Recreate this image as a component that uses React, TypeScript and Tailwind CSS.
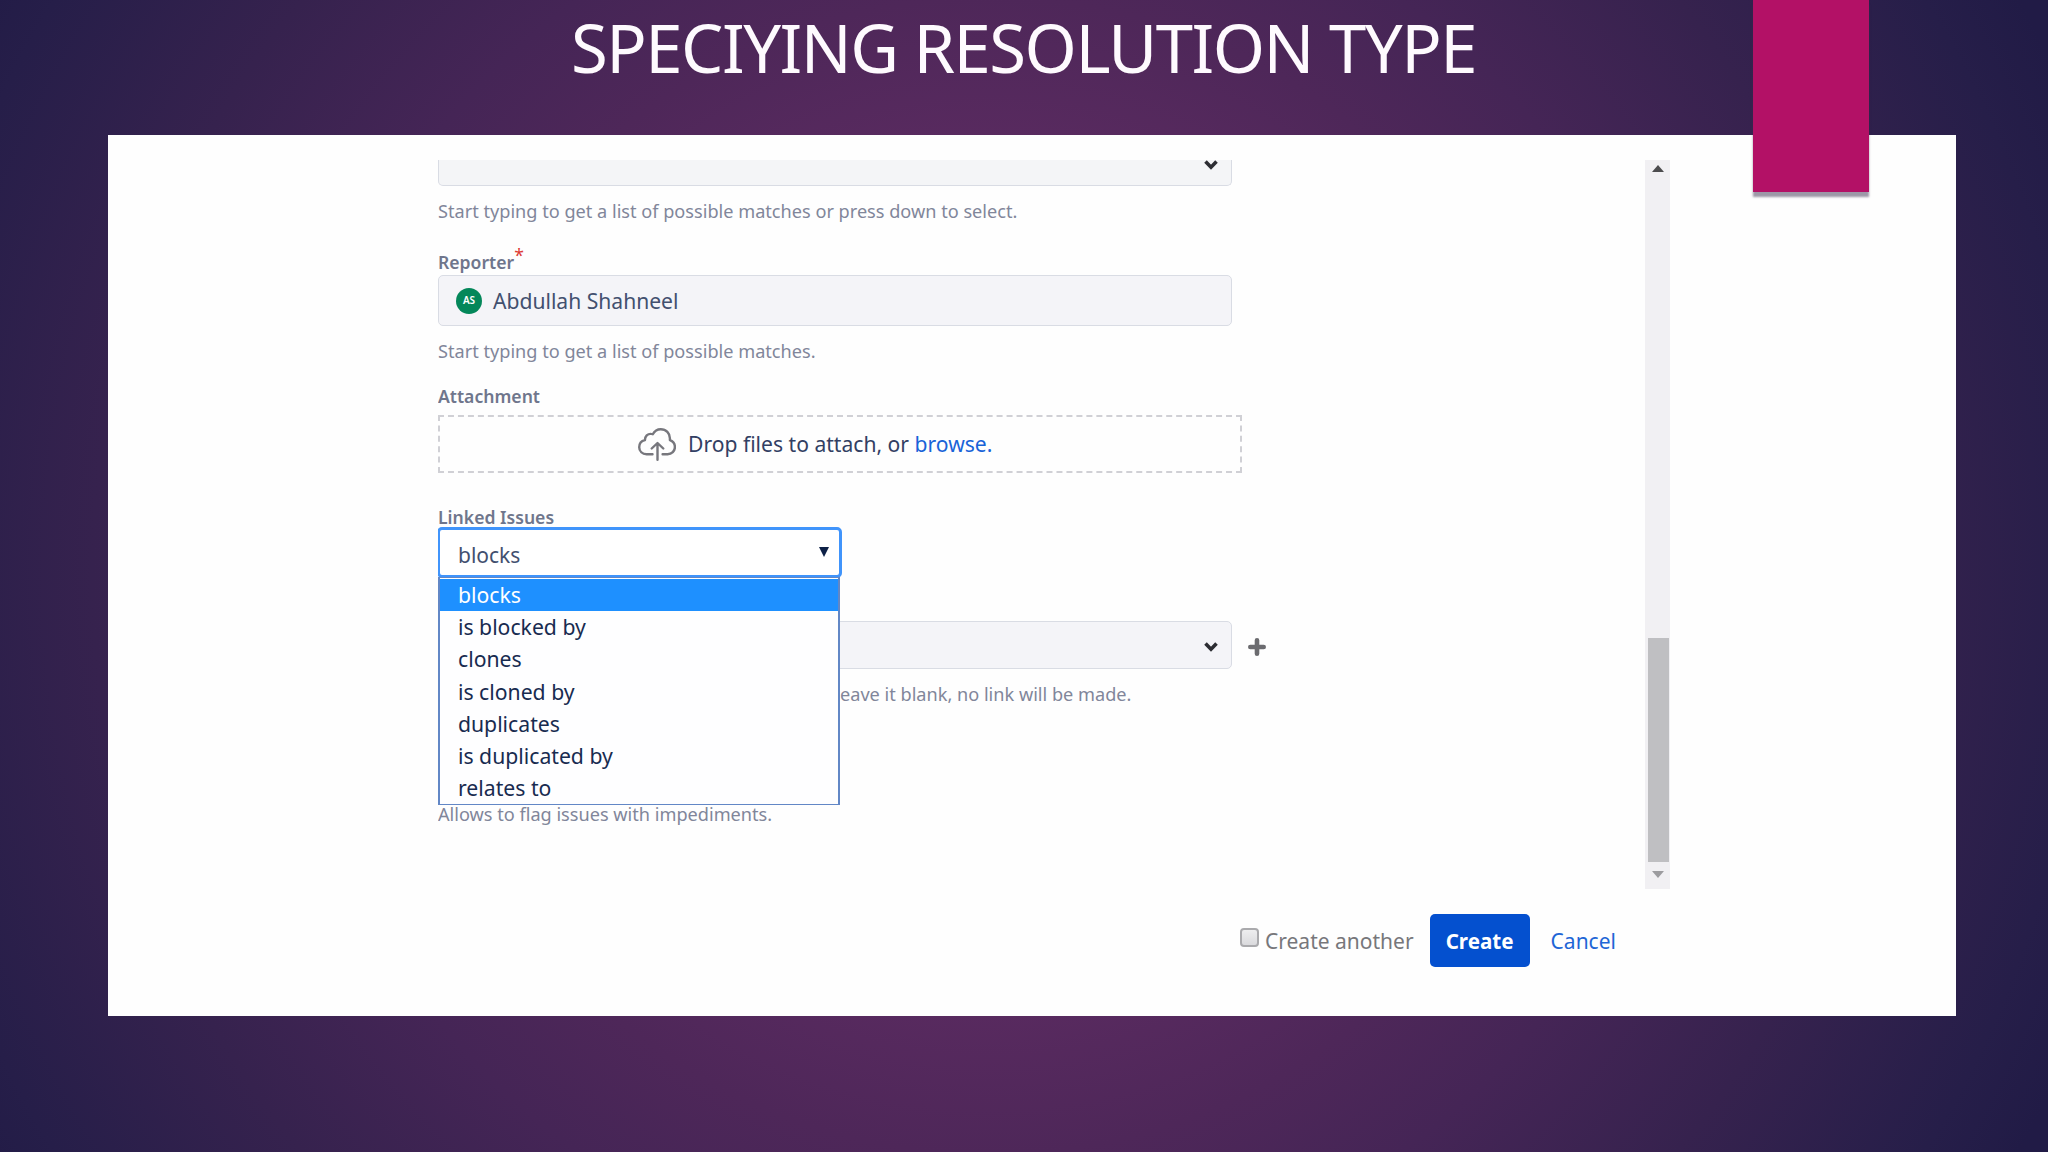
import type { ReactNode } from 'react';

const linkTypes = ['blocks', 'is blocked by', 'clones', 'is cloned by', 'duplicates', 'is duplicated by', 'relates to'];

function Hint({ children, className = '' }: { children: ReactNode; className?: string }) {
  return <p className={`h-6 whitespace-nowrap text-[18.15px] leading-6 text-[#81869a] ${className}`}>{children}</p>;
}

function Label({ children, className = '' }: { children: ReactNode; className?: string }) {
  return (
    <div className={`h-6 whitespace-nowrap text-[17.6px] font-semibold leading-6 text-[#6f768c] ${className}`}>{children}</div>
  );
}

function Chevron({ className = '' }: { className?: string }) {
  return (
    <svg viewBox="0 0 14 10" className={`h-[10px] w-[14px] ${className}`} fill="none" stroke="#2c2d33" strokeWidth="3.6">
      <path d="M1.5 1.6 7 7.2l5.5-5.6" />
    </svg>
  );
}

function UploadCloud() {
  return (
    <svg viewBox="0 0 38 33" className="h-[33px] w-[38px]" fill="none" stroke="#77777d" strokeWidth="2.4" strokeLinecap="round" strokeLinejoin="round">
      <path d="M14.5 26.3H8.6C4.3 26.3 1.2 23.200 1.200 19.200c0-3.600 2.300-6.300 5.700-7.100C7 8.200 9.600 5.700 13.100 5.900c.6 0 1.200.1 1.700.3C16.500 3 19.400 1.200 22.800 1.200c5.300 0 9.200 4.100 9.100 9.300v1.600c2.900 1 5 3.700 5 7 0 4-3.200 7.200-7.300 7.200h-5" />
      <path d="M19.500 31.800V15.200M13.700 20.500l5.800-5.500 5.800 5.500" />
    </svg>
  );
}

function LinkTypeSelect() {
  return (
    <div className="relative z-10 -mt-0.5 h-[50px] w-[404px] shrink-0">
      <div className="-ml-px flex h-[51px] w-[405px] items-center justify-between rounded-[5px] border-[3px] border-[#4094fb] bg-white pl-[18px] pr-[10px] pt-[4px]">
        <span className="text-[21px] leading-8 text-[#42506f]">blocks</span>
        <svg viewBox="0 0 10 10" className="mb-1.5 h-[10px] w-[10px]" fill="#0d2147">
          <path d="M0 0h10L5 10z" />
        </svg>
      </div>
      <ul className="absolute left-0 top-[50px] w-[402px] border-x-2 border-y border-[#6287c6] bg-[#fefeff] pt-px">
        {linkTypes.map((type, i) => (
          <li
            key={type}
            className={`h-[32.2px] pl-[18px] text-[21.2px] leading-[32.2px] ${i === 0 ? 'bg-[#1e90ff] text-white' : 'text-[#182b50]'}`}
          >
            {type}
          </li>
        ))}
      </ul>
    </div>
  );
}

function IssueForm() {
  return (
    <div className="flex h-[729px] w-[1207px] flex-col overflow-hidden">
      <div className="h-[26px] w-[794px] shrink-0 rounded-b-[5px] border border-t-0 border-[#d9dce4] bg-[#f4f5f7]">
        <Chevron className="ml-auto mr-[13px]" />
      </div>
      <Hint className="mt-[13px]">Start typing to get a list of possible matches or press down to select.</Hint>

      <Label className="mt-[27px] flex">
        Reporter<span className="-mt-[7px] font-normal text-[#dd3b34]">*</span>
      </Label>
      <div className="mt-px flex h-[51px] w-[794px] shrink-0 items-center rounded-[5px] border border-[#d9dce4] bg-[#f4f4f8] pl-[17px]">
        <span className="flex size-[26px] items-center justify-center rounded-full bg-[#04875a] text-[10px] font-semibold text-white">AS</span>
        <span className="ml-[11px] text-[21.1px] leading-8 text-[#42506f]">Abdullah Shahneel</span>
      </div>
      <Hint className="mt-[13px]">Start typing to get a list of possible matches.</Hint>

      <Label className="mt-[21px]">Attachment</Label>
      <div className="mt-[7px] flex h-[58px] w-[804px] shrink-0 items-center border-2 border-dashed border-[#d0d0d5] pl-[198px]">
        <UploadCloud />
        <span className="ml-[12px] whitespace-pre text-[21.1px] leading-8 text-[#323f63]">
          Drop files to attach, or <a className="text-[#1963d8]">browse.</a>
        </span>
      </div>

      <Label className="mt-8">Linked Issues</Label>
      <LinkTypeSelect />

      <div className="mt-11 flex h-12 shrink-0 items-center">
        <div className="flex h-12 w-[794px] items-center justify-end rounded-[5px] border border-[#d9dce4] bg-[#f4f4f8] pr-[13px] pt-[3px]">
          <Chevron />
        </div>
        <svg viewBox="0 0 18 18" className="ml-4 mt-1 h-[18px] w-[18px]" stroke="#6b6b6f" strokeWidth="4.6" strokeLinecap="round">
          <path d="M9 2.300v13.400M2.300 9h13.400" />
        </svg>
      </div>
      <Hint className="ml-[402px] mt-[13px]">eave it blank, no link will be made.</Hint>
      <Hint className="mt-24">Allows to flag issues with impediments.</Hint>
    </div>
  );
}

function Scrollbar() {
  return (
    <div className="flex h-[729px] w-[25px] flex-col items-center bg-[#f1f0f3] pl-px">
      <svg viewBox="0 0 12 7" className="mt-[5px] h-[7px] w-[12px]" fill="#4c4c4e">
        <path d="M0 7h12L6 0z" />
      </svg>
      <div className="mt-[466px] h-[224px] w-[21px] bg-[#bfbfc2]" />
      <svg viewBox="0 0 12 7" className="mt-[9px] h-[7px] w-[12px]" fill="#9c9c9f">
        <path d="M0 0h12L6 7z" />
      </svg>
    </div>
  );
}

function Footer() {
  return (
    <div className="mt-[25px] flex h-[53px] items-center pl-[802px]">
      <span className="-mt-1.5 size-[19px] rounded-[4px] border-2 border-[#aaaaad] bg-gradient-to-b from-[#eeeeef] to-[#dadadd]" />
      <span className="ml-[6px] text-[21px] leading-8 text-[#77777b]">Create another</span>
      <button className="ml-[16px] h-[53px] w-[100px] rounded-[5px] bg-[#0450cf] text-[20.6px] font-bold leading-8 text-white">Create</button>
      <a className="ml-[21px] text-[21px] leading-8 text-[#1f66d6]">Cancel</a>
    </div>
  );
}

export default function App() {
  return (
    <div className="relative h-[1152px] w-[2048px] overflow-hidden bg-[radial-gradient(circle_1180px_at_990px_576px,#652d68_0%,#582a5f_37%,#4e2759_49%,#452556_60%,#36224e_76%,#261e49_93%,#211b46_100%)] font-['Noto_Sans',sans-serif]">
      <h1 className="h-[135px] whitespace-nowrap pl-[571px] pt-[5px] text-[67px] font-normal leading-[84px] tracking-[-1.5px] text-[#fefafe]">
        SPECIYING RESOLUTION TYPE
      </h1>
      <main className="ml-[108px] h-[881px] w-[1848px] bg-[#fefefe] pl-[330px] pt-[25px]">
        <div className="flex">
          <IssueForm />
          <Scrollbar />
        </div>
        <Footer />
      </main>
      <div className="absolute left-[1753px] top-0 h-[192px] w-[116px] bg-[#b31166] shadow-[0_5px_2px_rgba(60,50,80,0.5)]" />
    </div>
  );
}
